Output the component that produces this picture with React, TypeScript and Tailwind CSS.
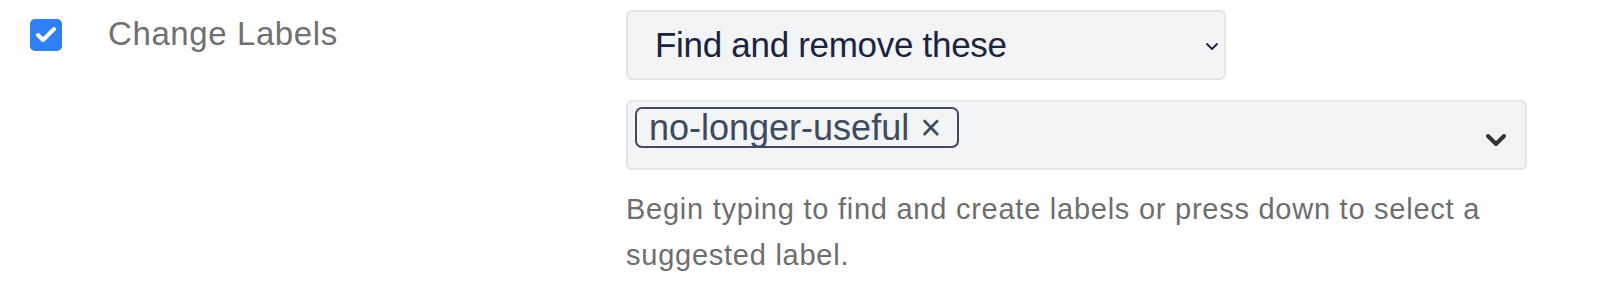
import { Check } from 'lucide-react';

export default function App() {
  return (
    <div className="w-[1612px] h-[289px] bg-white font-['Liberation_Sans',Arial,sans-serif] flex">
      {/* checkbox + label */}
      <div className="w-[626px] flex items-start pt-[19px] pl-[30px]">
        <div className="w-[32px] h-[32px] rounded-[5px] bg-[#2f80f5] flex items-center justify-center">
          <Check className="w-[24px] h-[24px] text-white" strokeWidth={4} />
        </div>
        <span className="ml-[46px] text-[33px] leading-[32px] text-[#707070] tracking-[0.6px] -mt-[1px]">Change Labels</span>
      </div>

      <div className="flex flex-col pt-[10px]">
        <div className="w-[600px] h-[70px] rounded-[6px] border-2 border-[#e3e5e9] bg-[#f3f4f6] flex items-center justify-between pl-[27px] pr-[5px]">
          <span className="text-[35px] text-[#1b2340] tracking-[-0.3px]">Find and remove these</span>
          <svg width="14" height="9" viewBox="0 0 14 9" fill="none" className="mt-[2px]">
            <path d="M2 2l5 5 5-5" stroke="#1b2340" strokeWidth="1.8" strokeLinecap="round" strokeLinejoin="round" />
          </svg>
        </div>

        <div className="mt-[20px] w-[901px] h-[70px] rounded-[6px] border-2 border-[#e3e5e9] bg-[#f3f4f6] flex items-start justify-between pl-[7px] pr-[18px] pt-[5px]">
          <div className="h-[41px] rounded-[7px] border-2 border-[#3f4a5f] flex items-center pl-[12px] pr-[16px] gap-[11px]">
            <span className="text-[36px] leading-none text-[#3f4a5f]">no-longer-useful</span>
            <span className="text-[36px] leading-none text-[#3f4a5f]">×</span>
          </div>
          <svg width="22" height="14" viewBox="0 0 22 14" fill="none" className="mt-[26px]">
            <path d="M3 3l8 8 8-8" stroke="#333333" strokeWidth="4" strokeLinecap="round" strokeLinejoin="round" />
          </svg>
        </div>

        <p className="mt-[16px] w-[880px] text-[29px] leading-[46px] tracking-[0.75px] text-[#6e6e6e]">
          Begin typing to find and create labels or press down to select a suggested label.
        </p>
      </div>
    </div>
  );
}
